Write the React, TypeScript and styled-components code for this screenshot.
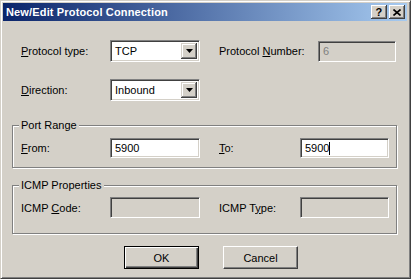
import styled, { createGlobalStyle } from "styled-components";

const GlobalStyle = createGlobalStyle`
  html, body {
    margin: 0;
    padding: 0;
    background: #d4d0c8;
  }
  body {
    font-family: "Liberation Sans", Arial, sans-serif;
    font-size: 11px;
    color: #000;
  }
`;

const Window = styled.div`
  width: 411px;
  height: 279px;
  box-sizing: border-box;
  background: #d4d0c8;
  border: 1px solid;
  border-color: #d4d0c8 #404040 #404040 #d4d0c8;
  box-shadow: inset 1px 1px #fff, inset -1px -1px #808080;
  padding: 2px 3px 3px 2px;
  display: flex;
  flex-direction: column;
`;

const TitleBar = styled.div`
  height: 18px;
  display: flex;
  align-items: center;
  padding: 0 2px 0 3px;
  background: linear-gradient(to right, #0a246a, #a6caf0);
  color: #fff;
  font-weight: bold;
  font-size: 11px;
  letter-spacing: 0.15px;
`;

const TitleButtons = styled.div`
  margin-left: auto;
  display: flex;
  gap: 2px;
`;

const CaptionButton = styled.div`
  width: 16px;
  height: 14px;
  box-sizing: border-box;
  background: #d4d0c8;
  box-shadow: inset -1px -1px #404040, inset 1px 1px #fff, inset -2px -2px #808080;
  display: flex;
  align-items: center;
  justify-content: center;
  color: #000;
  font-size: 11px;
  font-weight: bold;
  line-height: 1;
`;

const Content = styled.div`
  display: flex;
  flex-direction: column;
  padding: 19px 0 0 9px;
`;

const Row = styled.div<{ $labelW: number; $ctrlW: number; $h: number }>`
  display: grid;
  grid-template-columns: 89px 90px ${(p) => p.$labelW + 19}px ${(p) => p.$ctrlW}px;
  align-items: center;
  height: ${(p) => p.$h}px;
  padding-left: 9px;
  & + & {
    margin-top: 17px;
  }
`;

const Label = styled.span<{ $right?: boolean }>`
  padding-left: ${(p) => (p.$right ? 19 : 0)}px;
  white-space: nowrap;
`;

const U = styled.span`
  text-decoration: underline;
`;

const Sunken = styled.div<{ $h: number; $disabled?: boolean }>`
  height: ${(p) => p.$h}px;
  box-sizing: border-box;
  border: 1px solid;
  border-color: #808080 #fff #fff #808080;
  box-shadow: inset 1px 1px #404040, inset -1px -1px #d4d0c8;
  background: ${(p) => (p.$disabled ? "#d4d0c8" : "#fff")};
  color: ${(p) => (p.$disabled ? "#808080" : "#000")};
  display: flex;
  align-items: center;
  padding-left: 4px;
`;

const ComboBox = styled(Sunken)`
  padding: 2px 2px 2px 4px;
  align-items: stretch;
`;

const ComboText = styled.span`
  flex: 1;
  display: flex;
  align-items: center;
`;

const DropButton = styled.div`
  width: 16px;
  background: #d4d0c8;
  box-shadow: inset -1px -1px #404040, inset 1px 1px #d4d0c8, inset -2px -2px #808080, inset 2px 2px #fff;
  display: flex;
  align-items: center;
  justify-content: center;
`;

const Caret = styled.span`
  width: 1px;
  height: 13px;
  background: #000;
`;

const Group = styled.div<{ $h: number; $pt: number; $mt: number }>`
  position: relative;
  width: 385px;
  height: ${(p) => p.$h}px;
  box-sizing: border-box;
  border: 1px solid #808080;
  box-shadow: 1px 1px 0 #fff, inset 1px 1px 0 #fff;
  padding-top: ${(p) => p.$pt}px;
  margin-top: ${(p) => p.$mt}px;
  & > ${Row} {
    padding-left: 8px;
  }
`;

const Legend = styled.span`
  position: absolute;
  top: -7px;
  left: 6px;
  padding: 0 2px;
  line-height: 13px;
  background: #d4d0c8;
`;

const Buttons = styled.div`
  display: flex;
  justify-content: center;
  gap: 24px;
  margin-top: 12px;
  padding-left: 3px;
`;

const PushButton = styled.div<{ $default?: boolean }>`
  width: 75px;
  height: 23px;
  box-sizing: border-box;
  background: #d4d0c8;
  display: flex;
  align-items: center;
  justify-content: center;
  border: 1px solid;
  border-color: ${(p) => (p.$default ? "#000" : "#fff #404040 #404040 #fff")};
  box-shadow: ${(p) =>
    p.$default
      ? "inset 1px 1px #fff, inset -1px -1px #404040, inset -2px -2px #808080"
      : "inset -1px -1px #808080"};
`;

function Arrow() {
  return (
    <svg width="7" height="4" viewBox="0 0 7 4">
      <path d="M0 0h7L3.5 4z" fill="#000" />
    </svg>
  );
}

function Combo({ value }: { value: string }) {
  return (
    <ComboBox $h={22}>
      <ComboText>{value}</ComboText>
      <DropButton>
        <Arrow />
      </DropButton>
    </ComboBox>
  );
}

export default function App() {
  return (
    <>
      <GlobalStyle />
      <Window>
        <TitleBar>
          New/Edit Protocol Connection
          <TitleButtons>
            <CaptionButton>?</CaptionButton>
            <CaptionButton>
              <svg width="8" height="7" viewBox="0 0 8 7">
                <path d="M0.5 0.5l7 6M7.5 0.5l-7 6" stroke="#000" strokeWidth="1.6" />
              </svg>
            </CaptionButton>
          </TitleButtons>
        </TitleBar>
        <Content>
          <Row $labelW={99} $ctrlW={78} $h={22}>
            <Label>
              <U>P</U>rotocol type:
            </Label>
            <Combo value="TCP" />
            <Label $right>
              Protocol <U>N</U>umber:
            </Label>
            <Sunken $h={21} $disabled>
              6
            </Sunken>
          </Row>
          <Row $labelW={99} $ctrlW={78} $h={22}>
            <Label>
              <U>D</U>irection:
            </Label>
            <Combo value="Inbound" />
          </Row>

          <Group $h={43} $pt={12} $mt={24}>
            <Legend>Port Range</Legend>
            <Row $labelW={81} $ctrlW={89} $h={20}>
              <Label>
                <U>F</U>rom:
              </Label>
              <Sunken $h={20}>5900</Sunken>
              <Label $right>
                <U>T</U>o:
              </Label>
              <Sunken $h={20}>
                5900
                <Caret />
              </Sunken>
            </Row>
          </Group>

          <Group $h={49} $pt={11} $mt={17}>
            <Legend>ICMP Properties</Legend>
            <Row $labelW={81} $ctrlW={89} $h={21}>
              <Label>
                ICMP <U>C</U>ode:
              </Label>
              <Sunken $h={21} $disabled />
              <Label $right>
                ICMP T<U>y</U>pe:
              </Label>
              <Sunken $h={21} $disabled />
            </Row>
          </Group>

          <Buttons>
            <PushButton $default>OK</PushButton>
            <PushButton>Cancel</PushButton>
          </Buttons>
        </Content>
      </Window>
    </>
  );
}
